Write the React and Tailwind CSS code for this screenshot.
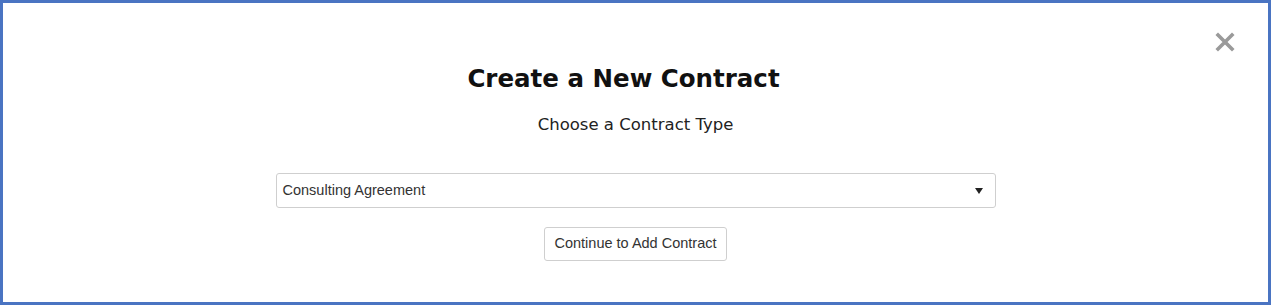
export default function App() {
  return (
    <div className="h-[305px] w-[1271px] border-[3px] border-[#4a74c2] bg-white">
      <div className="relative flex h-full flex-col items-center">
        <button className="absolute right-[33px] top-[29px] text-[#9a9a9a]" aria-label="Close">
          <svg width="20" height="20" viewBox="0 0 20 20">
            <path d="M3 3 L17 17 M17 3 L3 17" stroke="currentColor" strokeWidth="3.6" strokeLinecap="square" />
          </svg>
        </button>
        <h1 className="mr-[24px] mt-[58px] font-['DejaVu_Sans',sans-serif] text-[24.5px] font-bold leading-[36px] text-[#111]">
          Create a New Contract
        </h1>
        <p className="mt-[16px] font-['DejaVu_Sans',sans-serif] text-[16.5px] leading-[24px] text-[#222]">
          Choose a Contract Type
        </p>
        <div className="mt-[36px] flex h-[35px] w-[720px] items-center justify-between rounded-[3px] border border-[#cfcfcf] bg-white pl-[6px] pr-[12px] font-['Liberation_Sans',sans-serif] text-[14.5px] text-[#333]">
          <span>Consulting Agreement</span>
          <svg width="8" height="6" viewBox="0 0 8 6">
            <path d="M0 0 L8 0 L4 6 Z" fill="#222" />
          </svg>
        </div>
        <button className="mt-[19px] h-[34px] rounded-[3px] border border-[#cfcfcf] bg-white px-[9px] font-['Liberation_Sans',sans-serif] text-[14.5px] text-[#333]">
          Continue to Add Contract
        </button>
      </div>
    </div>
  );
}
